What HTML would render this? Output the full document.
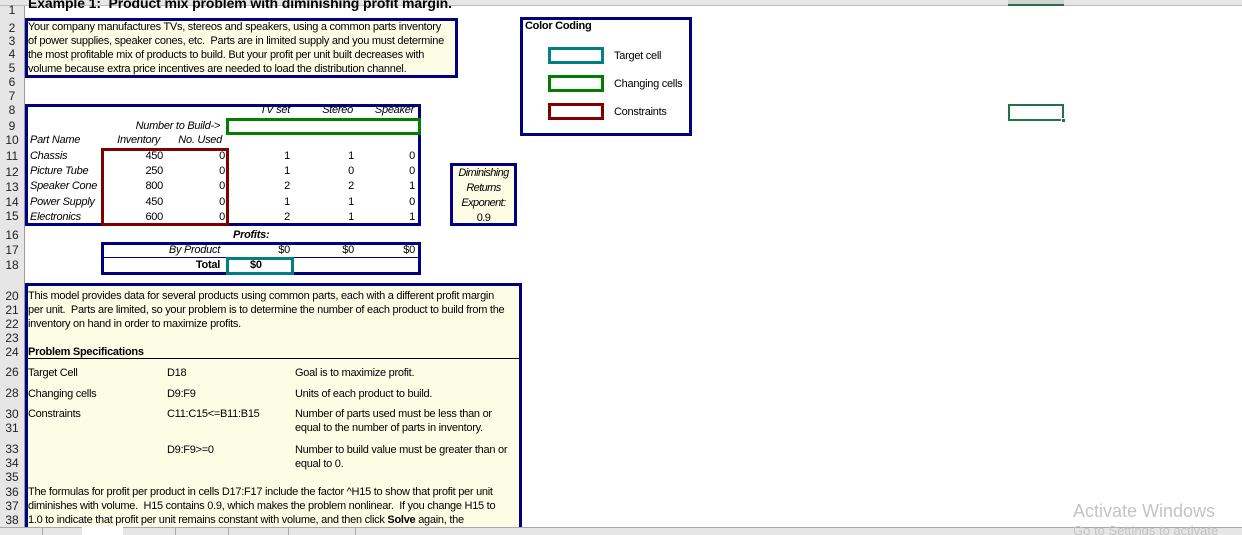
<!DOCTYPE html>
<html><head><meta charset="utf-8">
<style>
*{margin:0;padding:0;box-sizing:border-box}
html,body{width:1242px;height:535px;overflow:hidden}
body{position:relative;background:#fff;font-family:"Liberation Sans",sans-serif;font-size:11px;letter-spacing:-0.27px;color:#000}
.a{position:absolute;white-space:nowrap;line-height:14px}
.box{position:absolute;border:3px solid #000080}
.yel{background:#fdfde6}
.rn{position:absolute;left:0;width:24px;text-align:center;font-family:"Liberation Sans",sans-serif;font-size:12px;letter-spacing:0;line-height:14px;color:#222}
.i{font-style:italic}
.r{text-align:right}
</style></head><body>
<div style="position:absolute;left:0;top:0;width:1242px;height:6px;background:#e6e6e6;border-bottom:1px solid #bbb"></div>
<div style="position:absolute;left:1008px;top:0;width:56px;height:6px;background:#d2d2d2;border-bottom:2px solid #217346"></div>
<div style="position:absolute;left:0;top:6px;width:25px;height:521px;background:#e6e6e6;border-right:1px solid #9a9a9a"></div>
<div class="rn" style="top:3px">1</div><div class="rn" style="top:21px">2</div><div class="rn" style="top:34px">3</div><div class="rn" style="top:47px">4</div><div class="rn" style="top:61px">5</div><div class="rn" style="top:75px">6</div><div class="rn" style="top:89px">7</div><div class="rn" style="top:103px">8</div><div class="rn" style="top:119px">9</div><div class="rn" style="top:133px">10</div><div class="rn" style="top:149px">11</div><div class="rn" style="top:165px">12</div><div class="rn" style="top:180px">13</div><div class="rn" style="top:195px">14</div><div class="rn" style="top:209px">15</div><div class="rn" style="top:228px">16</div><div class="rn" style="top:243px">17</div><div class="rn" style="top:258px">18</div>
<div class="rn" style="top:289px">20</div><div class="rn" style="top:303px">21</div><div class="rn" style="top:317px">22</div><div class="rn" style="top:331px">23</div><div class="rn" style="top:345px">24</div><div class="rn" style="top:365px">26</div><div class="rn" style="top:386px">28</div><div class="rn" style="top:407px">30</div><div class="rn" style="top:421px">31</div><div class="rn" style="top:442px">33</div><div class="rn" style="top:456px">34</div><div class="rn" style="top:470px">35</div><div class="rn" style="top:485px">36</div><div class="rn" style="top:499px">37</div><div class="rn" style="top:513px">38</div>

<div class="a" style="left:28px;top:0px;font-weight:bold;font-size:14px;line-height:14px;margin-top:-4px;letter-spacing:-0.1px">Example 1:&nbsp; Product mix problem with diminishing profit margin.</div>

<div class="box yel" style="left:25px;top:18px;width:433px;height:60px"></div>
<div class="a" style="left:28px;top:20px;line-height:14px">Your company manufactures TVs, stereos and speakers, using a common parts inventory<br>of power supplies, speaker cones, etc.&nbsp; Parts are in limited supply and you must determine<br>the most profitable mix of products to build. But your profit per unit built decreases with<br>volume because extra price incentives are needed to load the distribution channel.</div>

<div class="box" style="left:25px;top:104px;width:396px;height:122px"></div>
<div style="position:absolute;left:226px;top:118px;width:195px;height:17px;border:3px solid #008000"></div>
<div style="position:absolute;left:101px;top:148px;width:128px;height:78px;border:3px solid #800000"></div>
<div class="a i r" style="left:240px;top:105px;width:50px;line-height:11px">TV set</div>
<div class="a i r" style="left:300px;top:105px;width:53px;line-height:11px">Stereo</div>
<div class="a i r" style="left:360px;top:105px;width:54px;line-height:11px">Speaker</div>
<div class="a i r" style="left:100px;top:119px;width:120px">Number to Build-&gt;</div>
<div class="a i" style="left:30px;top:133px">Part Name</div>
<div class="a i r" style="left:100px;top:133px;width:60px">Inventory</div>
<div class="a i r" style="left:160px;top:133px;width:62px">No. Used</div>
<div class="a i" style="left:30px;top:149px;line-height:15.2px">Chassis<br>Picture Tube<br>Speaker Cone<br>Power Supply<br>Electronics</div>
<div class="a r" style="left:110px;top:149px;width:53px;line-height:15.2px">450<br>250<br>800<br>450<br>600</div>
<div class="a r" style="left:180px;top:149px;width:45px;line-height:15.2px">0<br>0<br>0<br>0<br>0</div>
<div class="a r" style="left:250px;top:149px;width:40px;line-height:15.2px">1<br>1<br>2<br>1<br>2</div>
<div class="a r" style="left:310px;top:149px;width:44px;line-height:15.2px">1<br>0<br>2<br>1<br>1</div>
<div class="a r" style="left:370px;top:149px;width:45px;line-height:15.2px">0<br>0<br>1<br>0<br>1</div>

<div class="box yel" style="left:450px;top:163px;width:67px;height:63px"></div>
<div class="a i" style="left:453px;top:166px;width:61px;text-align:center;line-height:15px;letter-spacing:-0.6px">Diminishing<br>Returns<br>Exponent:<br><span style="font-style:normal">0.9</span></div>

<div class="a i" style="left:233px;top:228px;font-weight:bold">Profits:</div>
<div class="box" style="left:101px;top:242px;width:320px;height:33px"></div>
<div style="position:absolute;left:104px;top:257px;width:314px;height:1px;background:#000080"></div>
<div style="position:absolute;left:226px;top:257px;width:68px;height:18px;border:3px solid #008080"></div>
<div class="a i r" style="left:120px;top:243px;width:100px">By Product</div>
<div class="a r" style="left:250px;top:243px;width:40px">$0</div>
<div class="a r" style="left:310px;top:243px;width:44px">$0</div>
<div class="a r" style="left:370px;top:243px;width:45px">$0</div>
<div class="a r" style="left:150px;top:258px;width:70px;font-weight:bold">Total</div>
<div class="a" style="left:250px;top:258px;font-weight:bold">$0</div>

<div class="box yel" style="left:25px;top:283px;width:497px;height:250px"></div>
<div style="position:absolute;left:28px;top:358px;width:491px;height:1px;background:#000"></div>
<div class="a" style="left:28px;top:289px">This model provides data for several products using common parts, each with a different profit margin<br>per unit.&nbsp; Parts are limited, so your problem is to determine the number of each product to build from the<br>inventory on hand in order to maximize profits.</div>
<div class="a" style="left:28px;top:345px;font-weight:bold">Problem Specifications</div>
<div class="a" style="left:28px;top:366px">Target Cell</div>
<div class="a" style="left:167px;top:366px">D18</div>
<div class="a" style="left:295px;top:366px">Goal is to maximize profit.</div>
<div class="a" style="left:28px;top:387px">Changing cells</div>
<div class="a" style="left:167px;top:387px">D9:F9</div>
<div class="a" style="left:295px;top:387px">Units of each product to build.</div>
<div class="a" style="left:28px;top:407px">Constraints</div>
<div class="a" style="left:167px;top:407px">C11:C15&lt;=B11:B15</div>
<div class="a" style="left:295px;top:407px">Number of parts used must be less than or<br>equal to the number of parts in inventory.</div>
<div class="a" style="left:167px;top:443px">D9:F9&gt;=0</div>
<div class="a" style="left:295px;top:443px">Number to build value must be greater than or<br>equal to 0.</div>
<div class="a" style="left:28px;top:485px">The formulas for profit per product in cells D17:F17 include the factor ^H15 to show that profit per unit<br>diminishes with volume.&nbsp; H15 contains 0.9, which makes the problem nonlinear.&nbsp; If you change H15 to<br>1.0 to indicate that profit per unit remains constant with volume, and then click <b>Solve</b> again, the</div>

<div class="box" style="left:520px;top:17px;width:172px;height:119px"></div>
<div class="a" style="left:525px;top:19px;font-weight:bold">Color Coding</div>
<div style="position:absolute;left:548px;top:47px;width:56px;height:17px;border:3px solid #008080"></div>
<div style="position:absolute;left:548px;top:75px;width:56px;height:17px;border:3px solid #008000"></div>
<div style="position:absolute;left:548px;top:103px;width:56px;height:17px;border:3px solid #800000"></div>
<div class="a" style="left:614px;top:49px">Target cell</div>
<div class="a" style="left:614px;top:77px">Changing cells</div>
<div class="a" style="left:614px;top:105px">Constraints</div>

<div style="position:absolute;left:1008px;top:104px;width:56px;height:17px;border:2px solid #217346"></div>
<div style="position:absolute;left:1061px;top:118px;width:5px;height:5px;background:#217346;border:1px solid #fff"></div>

<div style="position:absolute;left:0;top:527px;width:1242px;height:8px;background:#e6e6e6;border-top:1px solid #aaa"></div>
<div style="position:absolute;left:82px;top:526px;width:41px;height:9px;background:#fff"></div>
<div style="position:absolute;left:42px;top:528px;width:1px;height:7px;background:#aaa"></div>
<div style="position:absolute;left:175px;top:528px;width:1px;height:7px;background:#aaa"></div>
<div style="position:absolute;left:228px;top:528px;width:1px;height:7px;background:#aaa"></div>
<div style="position:absolute;left:288px;top:528px;width:1px;height:7px;background:#aaa"></div>
<div style="position:absolute;left:355px;top:528px;width:1px;height:7px;background:#aaa"></div>

<div class="a" style="left:1073px;top:500px;font-size:18px;line-height:22px;letter-spacing:0;color:#c4c4c4">Activate Windows</div>
<div class="a" style="left:1073px;top:524px;font-size:13px;letter-spacing:0;color:#c4c4c4">Go to Settings to activate</div>
</body></html>
